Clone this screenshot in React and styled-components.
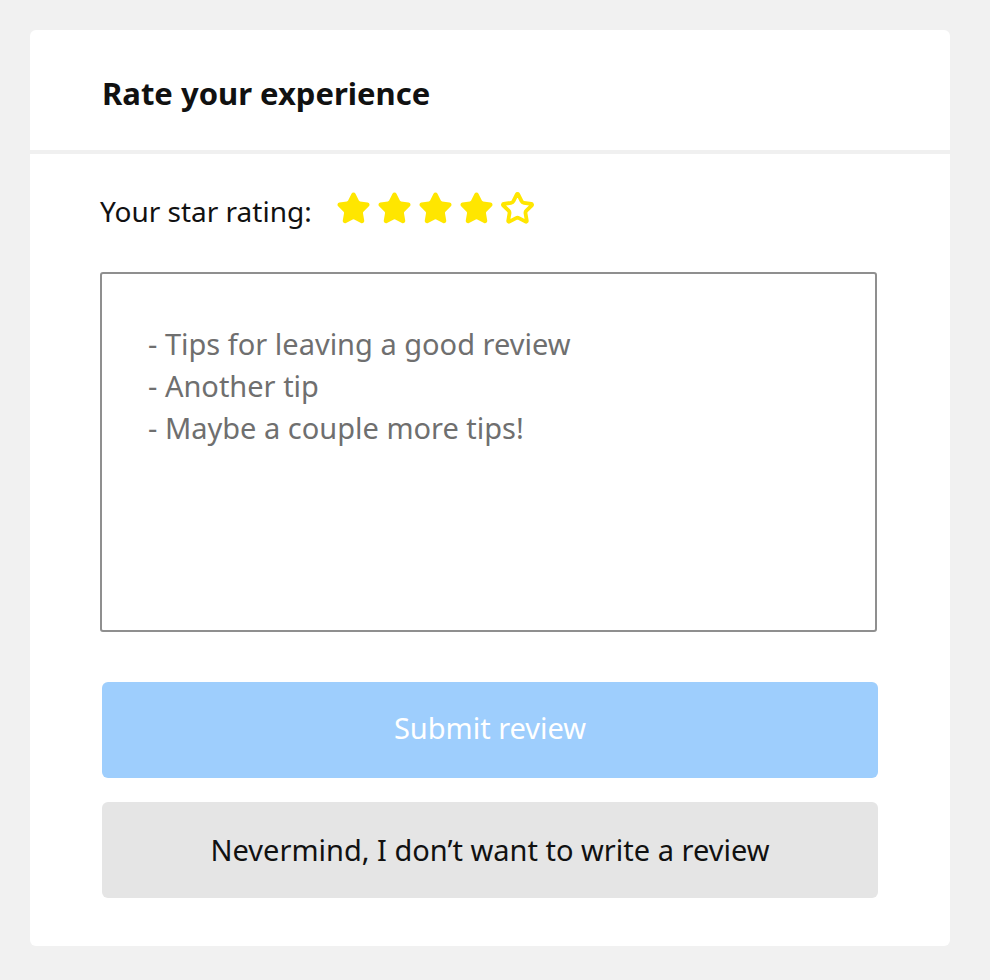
import React from "react";
import styled, { createGlobalStyle } from "styled-components";
import { Star } from "lucide-react";

const GlobalStyle = createGlobalStyle`
  html, body {
    margin: 0;
    padding: 0;
    background: #f1f1f1;
  }
  body {
    font-family: "Noto Sans", "Open Sans", sans-serif;
    color: #111;
  }
`;

const Page = styled.div`
  padding: 30px 40px 34px 30px;
`;

const Card = styled.div`
  width: 920px;
  background: #ffffff;
  border-radius: 6px;
  overflow: hidden;
`;

const Header = styled.div`
  height: 120px;
  padding: 0 72px;
  display: flex;
  align-items: center;
  border-bottom: 4px solid #f0f0f0;

  h2 {
    margin: 0;
    padding-top: 6px;
    font-size: 31px;
    font-weight: 700;
    color: #111;
  }
`;

const Body = styled.div`
  padding: 37px 72px 48px 70px;
  display: flex;
  flex-direction: column;
`;

const RatingRow = styled.div`
  height: 40px;
  display: flex;
  align-items: center;
  gap: 24px;
  font-size: 28px;
`;

const Stars = styled.div`
  display: flex;
  align-items: center;
  gap: 6px;
  margin-top: -6px;
`;

const Tips = styled.textarea`
  margin-top: 41px;
  width: 777px;
  height: 360px;
  box-sizing: border-box;
  border: 2px solid #8f8f8f;
  border-radius: 3px;
  padding: 49px 46px;
  font-family: inherit;
  font-size: 29px;
  line-height: 42px;
  color: #6f6f6f;
  resize: none;
  outline: none;

  &::placeholder {
    color: #6f6f6f;
  }
`;

const Button = styled.button`
  width: 776px;
  height: 96px;
  margin-left: 2px;
  padding: 0 0 ${(p) => (p.$primary ? "6px" : "2px")};
  border: none;
  border-radius: 6px;
  font-family: inherit;
  font-size: 29px;
  background: ${(p) => (p.$primary ? "#9ecefd" : "#e5e5e5")};
  color: ${(p) => (p.$primary ? "#ffffff" : "#111111")};
  margin-top: ${(p) => (p.$primary ? "50px" : "24px")};
  cursor: pointer;
`;

const placeholder =
  "- Tips for leaving a good review\n- Another tip\n- Maybe a couple more tips!";

export default function App() {
  const rating = 4;
  return (
    <>
      <GlobalStyle />
      <Page>
        <Card>
          <Header>
            <h2>Rate your experience</h2>
          </Header>
          <Body>
            <RatingRow>
              <span>Your star rating:</span>
              <Stars>
                {[1, 2, 3, 4, 5].map((n) => (
                  <Star
                    key={n}
                    size={35}
                    color="#ffe600"
                    fill={n <= rating ? "#ffe600" : "#ffffff"}
                    strokeWidth={n <= rating ? 2 : 2.6}
                  />
                ))}
              </Stars>
            </RatingRow>
            <Tips placeholder={placeholder} />
            <Button $primary>Submit review</Button>
            <Button>Nevermind, I don’t want to write a review</Button>
          </Body>
        </Card>
      </Page>
    </>
  );
}
